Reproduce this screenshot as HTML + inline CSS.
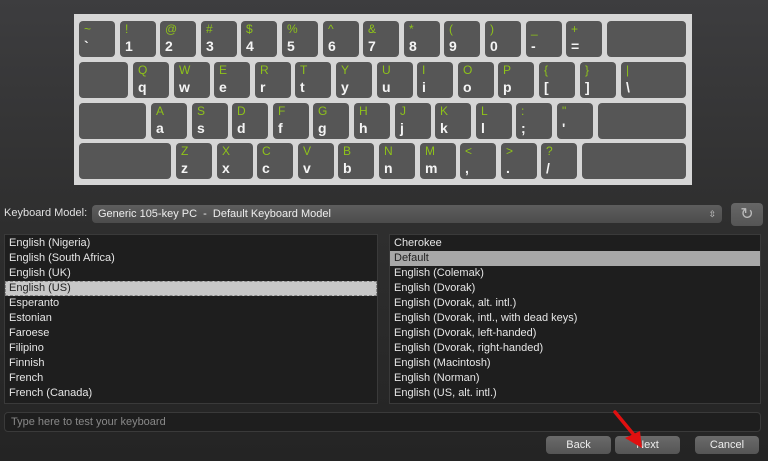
<!DOCTYPE html><html><head><style>
*{margin:0;padding:0;box-sizing:border-box}
body{width:768px;height:461px;overflow:hidden;background:linear-gradient(#3d3d3f,#2e2e2e 50%,#242424);font-family:"Liberation Sans",sans-serif;position:relative;color:#ddd}
.a{position:absolute}
#kb{left:74px;top:14px;width:618px;height:171px;background:#d6d6d6}
.k{position:absolute;height:36px;background:#565656;border-radius:4px;width:36px}
.k b{position:absolute;left:5px;top:1px;color:#8ec21a;font-size:12px;font-weight:normal}
.k i{position:absolute;left:5px;top:17px;color:#f4f4f4;font-size:14px;font-style:normal;font-weight:bold}
.list{background:#1e1e1e;border:1px solid #3a3a3a;font-size:11px;color:#e6e6e6}
.list div{height:15px;line-height:15px;padding-left:4px}
.btn{top:436px;height:18px;background:linear-gradient(#6a6a6a,#555);border-radius:4px;font-size:11px;color:#eee;text-align:center;line-height:18px}
</style></head><body>
<div id="kb" class="a">
<div class="k" style="left:5px;top:7px"><b>~</b><i>`</i></div>
<div class="k" style="left:46px;top:7px"><b>!</b><i>1</i></div>
<div class="k" style="left:86px;top:7px"><b>@</b><i>2</i></div>
<div class="k" style="left:127px;top:7px"><b>#</b><i>3</i></div>
<div class="k" style="left:167px;top:7px"><b>$</b><i>4</i></div>
<div class="k" style="left:208px;top:7px"><b>%</b><i>5</i></div>
<div class="k" style="left:249px;top:7px"><b>^</b><i>6</i></div>
<div class="k" style="left:289px;top:7px"><b>&amp;</b><i>7</i></div>
<div class="k" style="left:330px;top:7px"><b>*</b><i>8</i></div>
<div class="k" style="left:370px;top:7px"><b>(</b><i>9</i></div>
<div class="k" style="left:411px;top:7px"><b>)</b><i>0</i></div>
<div class="k" style="left:452px;top:7px"><b>_</b><i>-</i></div>
<div class="k" style="left:492px;top:7px"><b>+</b><i>=</i></div>
<div class="k" style="left:533px;top:7px;width:79px"></div>
<div class="k" style="left:5px;top:48px;width:49px"></div>
<div class="k" style="left:59px;top:48px"><b>Q</b><i>q</i></div>
<div class="k" style="left:100px;top:48px"><b>W</b><i>w</i></div>
<div class="k" style="left:140px;top:48px"><b>E</b><i>e</i></div>
<div class="k" style="left:181px;top:48px"><b>R</b><i>r</i></div>
<div class="k" style="left:221px;top:48px"><b>T</b><i>t</i></div>
<div class="k" style="left:262px;top:48px"><b>Y</b><i>y</i></div>
<div class="k" style="left:303px;top:48px"><b>U</b><i>u</i></div>
<div class="k" style="left:343px;top:48px"><b>I</b><i>i</i></div>
<div class="k" style="left:384px;top:48px"><b>O</b><i>o</i></div>
<div class="k" style="left:424px;top:48px"><b>P</b><i>p</i></div>
<div class="k" style="left:465px;top:48px"><b>{</b><i>[</i></div>
<div class="k" style="left:506px;top:48px"><b>}</b><i>]</i></div>
<div class="k" style="left:547px;top:48px;width:65px"><b>|</b><i>\</i></div>
<div class="k" style="left:5px;top:89px;width:67px"></div>
<div class="k" style="left:77px;top:89px"><b>A</b><i>a</i></div>
<div class="k" style="left:118px;top:89px"><b>S</b><i>s</i></div>
<div class="k" style="left:158px;top:89px"><b>D</b><i>d</i></div>
<div class="k" style="left:199px;top:89px"><b>F</b><i>f</i></div>
<div class="k" style="left:239px;top:89px"><b>G</b><i>g</i></div>
<div class="k" style="left:280px;top:89px"><b>H</b><i>h</i></div>
<div class="k" style="left:321px;top:89px"><b>J</b><i>j</i></div>
<div class="k" style="left:361px;top:89px"><b>K</b><i>k</i></div>
<div class="k" style="left:402px;top:89px"><b>L</b><i>l</i></div>
<div class="k" style="left:442px;top:89px"><b>:</b><i>;</i></div>
<div class="k" style="left:483px;top:89px"><b>"</b><i>'</i></div>
<div class="k" style="left:524px;top:89px;width:88px"></div>
<div class="k" style="left:5px;top:129px;width:92px"></div>
<div class="k" style="left:102px;top:129px"><b>Z</b><i>z</i></div>
<div class="k" style="left:143px;top:129px"><b>X</b><i>x</i></div>
<div class="k" style="left:183px;top:129px"><b>C</b><i>c</i></div>
<div class="k" style="left:224px;top:129px"><b>V</b><i>v</i></div>
<div class="k" style="left:264px;top:129px"><b>B</b><i>b</i></div>
<div class="k" style="left:305px;top:129px"><b>N</b><i>n</i></div>
<div class="k" style="left:346px;top:129px"><b>M</b><i>m</i></div>
<div class="k" style="left:386px;top:129px"><b>&lt;</b><i>,</i></div>
<div class="k" style="left:427px;top:129px"><b>&gt;</b><i>.</i></div>
<div class="k" style="left:467px;top:129px"><b>?</b><i>/</i></div>
<div class="k" style="left:508px;top:129px;width:104px"></div>
</div>
<div class="a" style="left:4px;top:207px;font-size:11px;color:#e0e0e0">Keyboard Model:</div>
<div class="a" style="left:92px;top:205px;width:630px;height:18px;background:linear-gradient(#5e5e5e,#4c4c4c);border-radius:4px;font-size:11px;color:#eee;line-height:18px;padding-left:6px">Generic 105-key PC &nbsp;- &nbsp;Default Keyboard Model<span style="position:absolute;right:6px;top:0;font-size:9px;color:#ccc">⇳</span></div>
<div class="a" style="left:731px;top:203px;width:32px;height:23px;background:linear-gradient(#666,#555);border-radius:4px;text-align:center;line-height:23px;font-size:16px;color:#bbb">↻</div>
<div class="a list" style="left:4px;top:234px;width:374px;height:170px;padding-top:1px">
<div>English (Nigeria)</div><div>English (South Africa)</div><div>English (UK)</div>
<div style="background:#c8c8c8;color:#222;outline:1px dashed #888;outline-offset:-1px">English (US)</div>
<div>Esperanto</div><div>Estonian</div><div>Faroese</div><div>Filipino</div><div>Finnish</div><div>French</div><div>French (Canada)</div></div>
<div class="a list" style="left:389px;top:234px;width:372px;height:170px;padding-top:1px">
<div>Cherokee</div><div style="background:#a8a8a8;color:#222">Default</div><div>English (Colemak)</div><div>English (Dvorak)</div><div>English (Dvorak, alt. intl.)</div><div>English (Dvorak, intl., with dead keys)</div><div>English (Dvorak, left-handed)</div><div>English (Dvorak, right-handed)</div><div>English (Macintosh)</div><div>English (Norman)</div><div>English (US, alt. intl.)</div></div>
<div class="a" style="left:4px;top:412px;width:757px;height:20px;background:#1e1e1e;border:1px solid #3a3a3a;border-radius:4px;font-size:11px;color:#888;line-height:18px;padding-left:6px">Type here to test your keyboard</div>
<div class="a btn" style="left:546px;width:65px">Back</div>
<div class="a btn" style="left:615px;width:65px">Next</div>
<div class="a btn" style="left:695px;width:64px">Cancel</div>
<svg class="a" style="left:608px;top:405px" width="40" height="46"><line x1="7" y1="7" x2="26" y2="30" stroke="#e01010" stroke-width="3.5" stroke-linecap="round"/><polygon points="17,33 32,26 34,43" fill="#e01010"/></svg>
</body></html>
